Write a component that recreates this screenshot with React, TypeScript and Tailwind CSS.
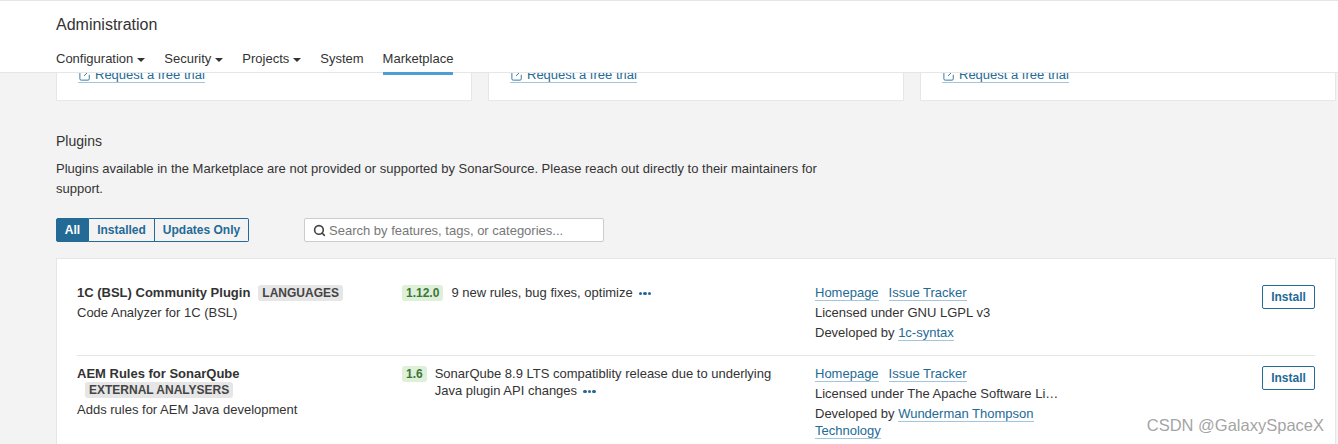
import { ExternalLink, Search } from "lucide-react";

function Caret() {
  return <span className="ml-1 inline-block border-x-[4px] border-t-[4px] border-x-transparent border-t-[#333] align-middle" />;
}

function A({ children, className = "" }: { children: React.ReactNode; className?: string }) {
  return <a className={"border-b border-[#a5c6da] leading-[15px] text-[#236a97] " + className}>{children}</a>;
}

function TrialCard() {
  return (
    <div className="h-[43px] flex-1 rounded-[1px] border border-[#e6e6e6] bg-white pl-[21px] pt-[8px]">
      <A className="inline-flex items-center gap-[2px]">
        <ExternalLink size={15} strokeWidth={1.4} />
        Request a free trial
      </A>
    </div>
  );
}

function Dots() {
  return (
    <span className="ml-[6px] inline-flex gap-[1px] align-middle">
      <i className="size-[3.5px] rounded-full bg-[#236a97]" />
      <i className="size-[3.5px] rounded-full bg-[#236a97]" />
      <i className="size-[3.5px] rounded-full bg-[#236a97]" />
    </span>
  );
}

function Tag({ children, className = "" }: { children: React.ReactNode; className?: string }) {
  return (
    <span className={"inline-block rounded-[3px] bg-[#e6e6e6] px-1 text-xs leading-4 font-bold text-[#444] " + className}>
      {children}
    </span>
  );
}

function Version({ children }: { children: React.ReactNode }) {
  return <span className="mr-2 rounded-[3px] bg-[#dff0d8] px-1 py-px text-xs leading-4 font-bold text-[#3c763d]">{children}</span>;
}

function Install() {
  return (
    <button className="mt-[2px] h-6 w-[53px] rounded-[2px] border border-[#236a97] bg-white text-xs font-bold text-[#236a97]">
      Install
    </button>
  );
}

export default function App() {
  return (
    <div className="h-[444px] overflow-hidden bg-[#f3f3f3] font-['Liberation_Sans',Arial,sans-serif] text-[13px] leading-5 text-[#333]">
      <header className="relative z-10 h-[73px] border-t border-b border-[#e6e6e6] bg-white px-14">
        <h1 className="pt-[14px] text-base leading-5">Administration</h1>
        <nav className="mt-[14px] flex gap-[19px]">
          <span className="h-[26px]">Configuration<Caret /></span>
          <span>Security<Caret /></span>
          <span>Projects<Caret /></span>
          <span>System</span>
          <span className="h-[26px] border-b-[3px] border-[#4b9fd5]">Marketplace</span>
        </nav>
      </header>

      <main className="mr-[2px] pl-14">
        <div className="-mt-[15px] flex gap-4">
          <TrialCard />
          <TrialCard />
          <TrialCard />
        </div>

        <h2 className="mt-[30px] text-sm leading-5">Plugins</h2>
        <p className="mt-2 w-[780px]">
          Plugins available in the Marketplace are not provided or supported by SonarSource. Please reach out directly to their maintainers for support.
        </p>

        <div className="mt-[19px] flex items-center">
          <div className="flex h-6 text-xs font-bold text-[#236a97]">
            <button className="w-[33px] rounded-l-[2px] border border-[#236a97] bg-[#236a97] text-white">All</button>
            <button className="w-[66px] border-y border-r border-[#236a97]">Installed</button>
            <button className="w-[94px] rounded-r-[2px] border-y border-r border-[#236a97]">Updates Only</button>
          </div>
          <div className="ml-[55px] flex h-6 w-[300px] items-center gap-[3px] rounded-[2px] border border-[#ccc] bg-white pl-[8px] pt-px text-[#777]">
            <Search size={13} strokeWidth={3} className="text-[#444]" />
            Search by features, tags, or categories...
          </div>
        </div>

        <div className="mt-[16px] border border-[#e6e6e6] bg-white px-5">
          <div className="flex h-[97px] border-b border-[#e6e6e6] pt-6">
            <div className="w-[325px]">
              <div><b>1C (BSL) Community Plugin</b><Tag className="ml-2">LANGUAGES</Tag></div>
              <div>Code Analyzer for 1C (BSL)</div>
            </div>
            <div className="w-[413px]"><Version>1.12.0</Version>9 new rules, bug fixes, optimize<Dots /></div>
            <div className="flex-1 pt-[2px]">
              <div className="flex h-[18px] gap-[10px]"><A className="h-fit">Homepage</A><A className="h-fit">Issue Tracker</A></div>
              <div>Licensed under GNU LGPL v3</div>
              <div>Developed by <A>1c-syntax</A></div>
            </div>
            <Install />
          </div>
          <div className="flex h-[100px] pt-2">
            <div className="w-[325px] pt-[2px]">
              <div className="h-[14px] leading-4"><b>AEM Rules for SonarQube</b></div>
              <Tag className="ml-2 block w-fit">EXTERNAL ANALYSERS</Tag>
              <div>Adds rules for AEM Java development</div>
            </div>
            <div className="flex w-[413px]">
              <div><Version>1.6</Version></div>
              <div className="w-[345px] pt-px leading-[17px]">SonarQube 8.9 LTS compatiblity release due to underlying Java plugin API changes<Dots /></div>
            </div>
            <div className="flex-1 pt-[2px]">
              <div className="flex h-[18px] gap-[10px]"><A className="h-fit">Homepage</A><A className="h-fit">Issue Tracker</A></div>
              <div className="h-[21px] w-[245px] truncate">Licensed under The Apache Software License</div>
              <div className="w-[245px] leading-[17px]">Developed by <A>Wunderman Thompson Technology</A></div>
            </div>
            <Install />
          </div>
        </div>
      </main>
      <div className="absolute right-[14px] top-[413px] text-[16.5px] leading-6 text-[#8b8b8b]/80">CSDN @GalaxySpaceX</div>
    </div>
  );
}
